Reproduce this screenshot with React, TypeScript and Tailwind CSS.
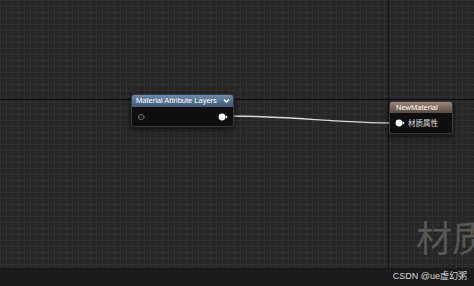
import React from 'react';

function Wire() {
    return (
        <svg className="pointer-events-none absolute inset-0" width="474" height="286" viewBox="0 0 474 286">
            <path d="M226 116 C 300 116, 330 123, 398 123" stroke="#d8d8d8" strokeWidth="1.4" fill="none" />
        </svg>
    );
}

function OutPin() {
    return (
        <svg width="10" height="8" viewBox="0 0 10 8">
            <circle cx="4" cy="4" r="3.4" fill="#fff" />
            <path d="M7.6 2.2 L9.6 4 L7.6 5.8 Z" fill="#fff" />
        </svg>
    );
}

export default function App() {
    return (
        <div className="relative h-[286px] w-[474px] overflow-hidden bg-[#262626]">
            {/* graph grid */}
            <div className="absolute inset-0 bg-[linear-gradient(to_right,#2f2f2f_1px,transparent_1px),linear-gradient(to_bottom,#2f2f2f_1px,transparent_1px)] bg-[size:6px_6px]" />
            <div className="absolute left-0 right-0 top-[99px] h-px bg-[#0c0c0c]" />
            <div className="absolute bottom-0 top-0 left-[388px] w-px bg-[#141414]" />

            {/* watermark */}
            <div className="absolute left-[416px] top-[218px] whitespace-nowrap font-['Noto_Sans_CJK_SC',sans-serif] text-[36px] leading-none text-[#575757]">
                材质
            </div>

            <Wire />

            {/* Material Attribute Layers node */}
            <div className="absolute left-[131px] top-[94px] w-[103px] overflow-hidden rounded-[3px] border border-[#3a3a3a] bg-[#0f0f0f] shadow-[0_2px_6px_rgba(0,0,0,0.6)]">
                <div className="flex h-[12px] items-center justify-between bg-[linear-gradient(to_bottom,#6c8aa8,#3f5a78)] pl-[4px] pr-[3px] font-['Liberation_Sans',sans-serif] text-[7.5px] text-white">
                    <span>Material Attribute Layers</span>
                    <svg width="7" height="6" viewBox="0 0 7 6">
                        <path d="M1 1.5 L3.5 4 L6 1.5" stroke="#fff" strokeWidth="1.4" fill="none" />
                    </svg>
                </div>
                <div className="flex h-[19px] items-center justify-between px-[5px]">
                    <svg width="8" height="8" viewBox="0 0 8 8">
                        <circle cx="4" cy="4" r="2.6" stroke="#6a6a6a" strokeWidth="1" fill="none" />
                        <path d="M6.6 3 L7.6 4 L6.6 5" stroke="#6a6a6a" strokeWidth="0.8" fill="none" />
                    </svg>
                    <OutPin />
                </div>
            </div>

            {/* NewMaterial node */}
            <div className="absolute left-[389px] top-[101px] w-[64px] overflow-hidden rounded-[3px] border border-[#3a3a3a] bg-[#0f0f0f] shadow-[0_2px_6px_rgba(0,0,0,0.6)]">
                <div className="flex h-[11px] items-center bg-[linear-gradient(to_bottom,#9a8678,#5a4a40)] px-[6px] font-['Liberation_Sans',sans-serif] text-[7.5px] text-white">
                    NewMaterial
                </div>
                <div className="flex h-[20px] items-center gap-[3px] pl-[5px]">
                    <OutPin />
                    <span className="font-['Noto_Sans_CJK_SC',sans-serif] text-[7.5px] text-[#e0e0e0]">材质属性</span>
                </div>
            </div>

            {/* bottom bar */}
            <div className="absolute bottom-0 left-0 right-0 flex h-[18px] items-center justify-end bg-[#1a1a1a] pr-[7px]">
                <span className="font-['Liberation_Sans','Noto_Sans_CJK_SC',sans-serif] text-[9px] text-[#d8d8d8]">CSDN @ue虚幻粥</span>
            </div>
        </div>
    );
}
